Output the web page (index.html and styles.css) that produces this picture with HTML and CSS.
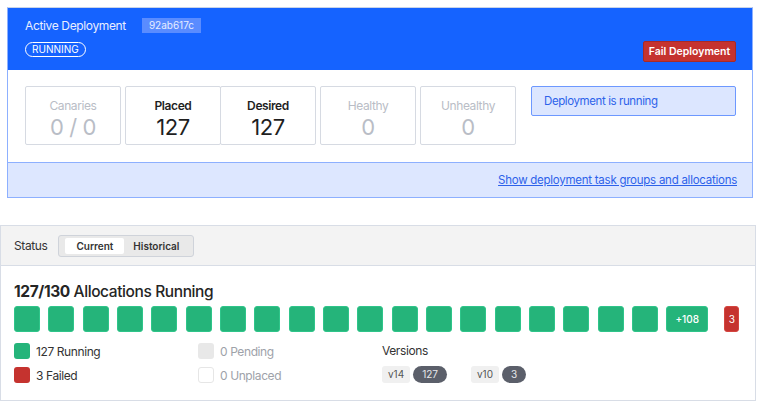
FILE: index.html
```html
<!DOCTYPE html>
<html>
<head>
<meta charset="utf-8">
<link rel="stylesheet" href="styles.css">
</head>
<body>
<div class="deploy-card">
  <div class="deploy-head">
    <div class="head-left">
      <div class="head-title">
        <span class="title-text">Active Deployment</span>
        <span class="hash">92ab617c</span>
      </div>
      <span class="tag-running">RUNNING</span>
    </div>
    <button class="btn-fail">Fail Deployment</button>
  </div>
  <div class="deploy-body">
    <div class="stats">
      <div class="stat muted"><div class="stat-label">Canaries</div><div class="stat-value">0 / 0</div></div>
      <div class="stat-group">
        <div class="stat"><div class="stat-label">Placed</div><div class="stat-value">127</div></div>
        <div class="stat joined"><div class="stat-label">Desired</div><div class="stat-value">127</div></div>
      </div>
      <div class="stat muted"><div class="stat-label">Healthy</div><div class="stat-value">0</div></div>
      <div class="stat muted"><div class="stat-label">Unhealthy</div><div class="stat-value">0</div></div>
    </div>
    <div class="notice">Deployment is running</div>
  </div>
  <div class="deploy-foot">
    <a class="foot-link" href="#">Show deployment task groups and allocations</a>
  </div>
</div>

<div class="status-card">
  <div class="status-head">
    <span class="status-label">Status</span>
    <div class="toggle">
      <span class="toggle-btn active">Current</span>
      <span class="toggle-btn">Historical</span>
    </div>
  </div>
  <div class="status-body">
    <h3 class="alloc-title"><strong>127/130</strong> Allocations Running</h3>
    <div class="alloc-row">
      <span class="sq"></span><span class="sq"></span><span class="sq"></span><span class="sq"></span><span class="sq"></span>
      <span class="sq"></span><span class="sq"></span><span class="sq"></span><span class="sq"></span><span class="sq"></span>
      <span class="sq"></span><span class="sq"></span><span class="sq"></span><span class="sq"></span><span class="sq"></span>
      <span class="sq"></span><span class="sq"></span><span class="sq"></span><span class="sq"></span>
      <span class="sq more">+108</span>
      <span class="sq failed">3</span>
    </div>
    <div class="legend">
      <div class="legend-col">
        <div class="legend-item"><span class="swatch green"></span>127 Running</div>
        <div class="legend-item"><span class="swatch red"></span>3 Failed</div>
      </div>
      <div class="legend-col faded">
        <div class="legend-item"><span class="swatch gray"></span>0 Pending</div>
        <div class="legend-item"><span class="swatch white"></span>0 Unplaced</div>
      </div>
      <div class="legend-col">
        <div class="versions-label">Versions</div>
        <div class="versions">
          <span class="ver"><span class="ver-tag">v14</span><span class="ver-count">127</span></span>
          <span class="ver"><span class="ver-tag">v10</span><span class="ver-count">3</span></span>
        </div>
      </div>
    </div>
  </div>
</div>
</body>
</html>
```

FILE: styles.css
```css
* { box-sizing: border-box; }
body {
  margin: 0;
  font-family: Inter, "Liberation Sans", sans-serif;
  letter-spacing: -0.025em;
  color: #222;
  background: #fff;
}
.deploy-card {
  margin: 7px 6px 0 7px;
  width: 746px;
  border: 1px solid #8db0ff;
  border-top-color: #c9d4e8;
}
.deploy-head {
  background: #1563ff;
  height: 62px;
  padding: 10px 16px 8px 17px;
  display: flex;
  justify-content: space-between;
  align-items: flex-start;
}
.head-left { display: flex; flex-direction: column; align-items: flex-start; gap: 9px; }
.head-title { display: flex; align-items: center; gap: 16px; height: 15px; }
.title-text { color: #e8eeff; font-size: 12px; letter-spacing: -0.03em; }
.hash {
  background: #5a8cff;
  color: #e6edff;
  font-size: 10px;
  padding: 2px 7px;
  height: 15px;
  line-height: 11px;
  letter-spacing: 0;
}
.tag-running {
  color: #fff;
  border: 1px solid #fff;
  border-radius: 8px;
  font-size: 10px;
  padding: 0 6px;
  height: 15px;
  line-height: 13px;
  letter-spacing: 0;
}
.btn-fail {
  align-self: flex-end;
  background: #c5332f;
  border: 1px solid #a82a27;
  border-radius: 2px;
  color: #fff;
  font-family: inherit;
  font-weight: 600;
  font-size: 10.5px;
  letter-spacing: 0;
  width: 93px;
  height: 21px;
  padding: 0;
}
.deploy-body {
  height: 92px;
  padding: 16px 16px 0 17px;
  display: flex;
  justify-content: space-between;
  align-items: flex-start;
}
.stats { display: flex; gap: 4px; }
.stat-group { display: flex; }
.stat {
  width: 96px;
  height: 59px;
  border: 1px solid #d6dae2;
  border-radius: 2px;
  text-align: center;
  padding-top: 11px;
  color: #1f1f1f;
}
.stat.joined { margin-left: -1px; }
.stat-label { font-size: 12px; font-weight: 600; line-height: 15px; }
.stat-value { font-size: 22px; line-height: 29px; }
.stat.muted { color: #b9bdc6; }
.stat.muted .stat-label { font-weight: 400; }
.notice {
  width: 205px;
  height: 30px;
  background: #dce6ff;
  border: 1px solid #6d98ff;
  border-radius: 2px;
  color: #2d62ea;
  font-size: 11.5px;
  padding: 0 12px;
  line-height: 28px;
}
.deploy-foot {
  height: 35px;
  background: #dde7ff;
  border-top: 1px solid #8db0ff;
  display: flex;
  justify-content: flex-end;
  align-items: center;
  padding-right: 15px;
}
.foot-link { color: #2d62ea; font-size: 11.5px; text-decoration: underline; letter-spacing: -0.022em; }

.status-card {
  margin-top: 27px;
  width: 756px;
  border: 1px solid #d8dde6;
}
.status-head {
  background: #f3f3f3;
  height: 40px;
  border-bottom: 1px solid #d8dde6;
  display: flex;
  align-items: center;
  padding-left: 13px;
  gap: 11px;
}
.status-label { font-size: 12px; color: #333; }
.toggle {
  display: flex;
  background: #e9e9e9;
  border: 1px solid #cfd3da;
  border-radius: 3px;
  padding: 2px 5px 2px 6px;
  height: 22px;
  width: 136px;
}
.toggle-btn {
  font-size: 10px;
  font-weight: 600;
  color: #333;
  line-height: 16px;
  text-align: center;
  letter-spacing: 0;
}
.toggle-btn.active { background: #fff; border-radius: 2px; width: 59px; }
.toggle-btn:not(.active) { width: 64px; }
.status-body { padding: 16px 0 17px 13px; }
.alloc-title {
  margin: 0;
  font-size: 15.5px;
  font-weight: 500;
  color: #252525;
  line-height: 20px;
}
.alloc-title strong { font-weight: 700; }
.alloc-row { display: flex; margin-top: 4px; height: 26px; }
.sq {
  flex-shrink: 0;
  width: 26px;
  height: 26px;
  background: #25b47a;
  border-radius: 3px;
  margin-right: 8.33px;
  border: 1px solid #2fc58a;
}
.sq.more {
  width: 42px;
  color: #fff;
  font-size: 10px;
  font-weight: 500;
  text-align: center;
  line-height: 24px;
  margin-right: 16px;
  letter-spacing: 0;
}
.sq.failed {
  width: 15px;
  background: #c5332f;
  border-color: #d4453f;
  color: #fff;
  font-size: 10px;
  text-align: center;
  line-height: 24px;
}
.legend { display: flex; margin-top: 11px; }
.legend-col { width: 184px; display: flex; flex-direction: column; gap: 8px; }
.legend-item { display: flex; align-items: center; font-size: 12px; color: #333; height: 16px; }
.legend-col.faded .legend-item { color: #9ea2a9; }
.swatch { width: 16px; height: 16px; border-radius: 3px; margin-right: 6px; }
.swatch.green { background: #25b47a; }
.swatch.red { background: #c5332f; }
.swatch.gray { background: #e8e8e8; }
.swatch.white { background: #fff; border: 1px solid #e6e6e6; }
.versions-label { font-size: 12px; color: #333; height: 16px; line-height: 16px; }
.versions { display: flex; gap: 24px; margin-top: -1px; }
.ver { display: flex; gap: 3px; }
.ver-tag {
  background: #f0f0f0;
  color: #555;
  font-size: 10px;
  height: 17px;
  line-height: 17px;
  padding: 0 6px;
  border-radius: 3px;
  letter-spacing: 0;
}
.ver-count {
  background: #5b5f6a;
  color: #e6e7ea;
  font-size: 10px;
  height: 17px;
  line-height: 17px;
  padding: 0 9px;
  border-radius: 9px;
  letter-spacing: 0;
}
```
